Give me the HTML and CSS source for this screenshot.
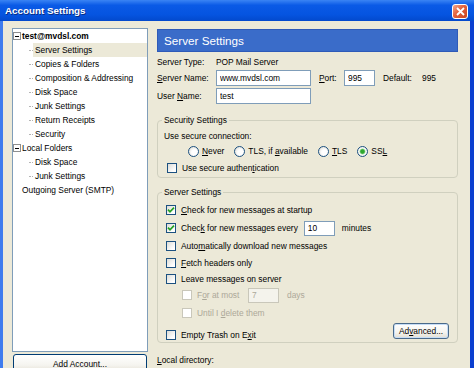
FILE: index.html
```html
<!DOCTYPE html>
<html lang="en">
<head>
    <meta charset="UTF-8" />
    <meta name="viewport" content="width=device-width, initial-scale=1.0" />
    <title>Account Settings</title>
    <link rel="stylesheet" href="styles.css">
</head>
<body>
    <div class="window">
        <div class="titlebar">
            <span class="title">Account Settings</span>
            <span class="close">
                <svg width="9" height="9" viewBox="0 0 9 9"><path d="M1 1 L8 8 M8 1 L1 8" stroke="#fff" stroke-width="1.8" /></svg>
            </span>
        </div>

        <div class="frame">
            <!-- left: account tree -->
            <div class="sidebar">
                <div class="tree">
                    <div class="tree-row account"><span class="expander"><i></i></span>test@mvdsl.com</div>
                    <div class="tree-row selected"><span class="twig"></span><span class="tree-label">Server Settings</span></div>
                    <div class="tree-row"><span class="twig"></span><span class="tree-label">Copies &amp; Folders</span></div>
                    <div class="tree-row"><span class="twig"></span><span class="tree-label">Composition &amp; Addressing</span></div>
                    <div class="tree-row"><span class="twig"></span><span class="tree-label">Disk Space</span></div>
                    <div class="tree-row"><span class="twig"></span><span class="tree-label">Junk Settings</span></div>
                    <div class="tree-row"><span class="twig"></span><span class="tree-label">Return Receipts</span></div>
                    <div class="tree-row"><span class="twig"></span><span class="tree-label">Security</span></div>
                    <div class="tree-row"><span class="expander"><i></i></span>Local Folders</div>
                    <div class="tree-row"><span class="twig"></span><span class="tree-label">Disk Space</span></div>
                    <div class="tree-row"><span class="twig"></span><span class="tree-label">Junk Settings</span></div>
                    <div class="tree-row top-plain">Outgoing Server (SMTP)</div>
                </div>
                <button class="btn add-account"><u>A</u>dd Account...</button>
            </div>

            <!-- right: settings page -->
            <div class="main">
                <div class="page-header">Server Settings</div>

                <div class="field-row type-row">
                    <span class="field-label">Server Type:</span>
                    <span>POP Mail Server</span>
                </div>
                <div class="field-row">
                    <label class="field-label"><u>S</u>erver Name:</label>
                    <input type="text" class="text server-name" value="www.mvdsl.com" />
                    <label class="port-label"><u>P</u>ort:</label>
                    <input type="text" class="text port" value="995" />
                    <span class="default-label">Default:</span>
                    <span>995</span>
                </div>
                <div class="field-row">
                    <label class="field-label">User <u>N</u>ame:</label>
                    <input type="text" class="text server-name" value="test" />
                </div>

                <fieldset class="group security">
                    <legend>Security Settings</legend>
                    <div class="sec-text">Use secure connection:</div>
                    <div class="radios">
                        <label class="radio-item"><span class="radio"></span><span><u>N</u>ever</span></label>
                        <label class="radio-item"><span class="radio"></span><span>TLS, if <u>a</u>vailable</span></label>
                        <label class="radio-item"><span class="radio"></span><span><u>T</u>LS</span></label>
                        <label class="radio-item"><span class="radio on"></span><span>SS<u>L</u></span></label>
                    </div>
                    <div class="opt sec-check">
                        <label class="check-item"><span class="check"></span><span>Use secure authen<u>t</u>ication</span></label>
                    </div>
                </fieldset>

                <fieldset class="group options">
                    <legend>Server Settings</legend>
                    <div class="opt">
                        <label class="check-item"><span class="check"><svg width="8" height="8" viewBox="0 0 8 8"><path d="M1 3.6 L3 5.8 L7 1.6" fill="none" stroke="#21A121" stroke-width="1.7" /></svg></span><span><u>C</u>heck for new messages at startup</span></label>
                    </div>
                    <div class="opt">
                        <label class="check-item"><span class="check"><svg width="8" height="8" viewBox="0 0 8 8"><path d="M1 3.6 L3 5.8 L7 1.6" fill="none" stroke="#21A121" stroke-width="1.7" /></svg></span><span>Chec<u>k</u> for new messages every</span></label>
                        <input type="text" class="text small minutes-input" value="10" />
                        <span class="unit">minutes</span>
                    </div>
                    <div class="opt tight">
                        <label class="check-item"><span class="check"></span><span>Auto<u>m</u>atically download new messages</span></label>
                    </div>
                    <div class="opt tight">
                        <label class="check-item"><span class="check"></span><span><u>F</u>etch headers only</span></label>
                    </div>
                    <div class="opt short">
                        <label class="check-item"><span class="check"></span><span>Leave messages on server</span></label>
                    </div>
                    <div class="opt sub disabled">
                        <label class="check-item"><span class="check"></span><span class="for-label">F<u>o</u>r at most</span></label>
                        <input type="text" class="text small" value="7" disabled />
                        <span class="unit days">days</span>
                    </div>
                    <div class="opt sub disabled">
                        <label class="check-item"><span class="check"></span><span>Until I <u>d</u>elete them</span></label>
                    </div>
                    <div class="last-row">
                        <label class="check-item trash"><span class="check"></span><span>Empty Trash on E<u>x</u>it</span></label>
                        <button class="btn advanced">Ad<u>v</u>anced...</button>
                    </div>
                </fieldset>

                <div class="local-dir"><u>L</u>ocal directory:</div>
            </div>
        </div>
    </div>
</body>
</html>
```

FILE: styles.css
```css
body {
    margin: 0;
    padding: 0;
    font-family: "Liberation Sans", Arial, sans-serif;
    font-size: 8.4px;
    color: #000;
}
.window {
    width: 474px;
    height: 368px;
    display: flex;
    flex-direction: column;
    overflow: hidden;
}

/* title bar */
.titlebar {
    height: 21px;
    flex-shrink: 0;
    display: flex;
    align-items: center;
    justify-content: space-between;
    padding: 0 6px 0 5px;
    background: linear-gradient(#3A84F4, #0A5AE6 25%, #0554E0 70%, #0349CC);
}
.title {
    color: #fff;
    font-weight: bold;
    font-size: 9.8px;
    text-shadow: 1px 1px #0B2C80;
}
.close {
    width: 16px;
    height: 15px;
    margin-top: 2px;
    box-sizing: border-box;
    border: 1px solid #fff;
    border-radius: 3px;
    background: linear-gradient(135deg, #F4A88C, #E2603C 45%, #C8441F);
    display: flex;
    align-items: center;
    justify-content: center;
}

/* window body */
.frame {
    flex: 1;
    min-height: 0;
    display: flex;
    background: #ECE9D8;
    border-left: 3px solid #3F7CEE;
    border-right: 4px solid #0B3FD0;
    padding: 7px 0 0 9px;
    overflow: hidden;
}

/* tree */
.sidebar {
    width: 136px;
    flex-shrink: 0;
    display: flex;
    flex-direction: column;
}
.tree {
    height: 324px;
    flex-shrink: 0;
    box-sizing: border-box;
    border: 1px solid #7F9DB9;
    background: #fff;
}
.tree-row {
    height: 14px;
    display: flex;
    align-items: center;
    white-space: nowrap;
}
.account {
    font-weight: bold;
}
.expander {
    width: 8px;
    height: 8px;
    box-sizing: border-box;
    border: 1px solid #8E8F8F;
    margin-right: 1px;
    display: flex;
    align-items: center;
    justify-content: center;
}
.expander i {
    width: 4px;
    height: 1px;
    background: #000;
}
.twig {
    width: 4px;
    margin-left: 16px;
    border-top: 1px dotted #B4B4B4;
}
.tree-label {
    flex: 1;
    height: 14px;
    line-height: 14px;
    padding-left: 2px;
}
.selected .tree-label {
    background: #ECE9D8;
}
.top-plain {
    padding-left: 9px;
}

/* buttons */
.btn {
    font: inherit;
    color: #000;
    padding: 0;
    border: 1px solid #003C74;
    border-radius: 3px;
    background: linear-gradient(#FFFFFF, #F5F4EF 60%, #E2DED2);
}
.add-account {
    width: 134px;
    height: 19px;
    margin: 2px 0 0 1px;
    flex-shrink: 0;
}
.advanced {
    width: 56px;
    height: 16px;
    margin: 1px 0 0 auto;
    border-color: #4A6A8A;
    box-shadow: inset 0 0 0 1px #C6DDF6;
}

/* settings page */
.main {
    width: 301px;
    margin: 1px 0 0 9px;
    flex-shrink: 0;
}
.page-header {
    height: 23px;
    box-sizing: border-box;
    border: 1px solid #2E5AB8;
    background: #3A6CC9;
    color: #fff;
    font-size: 11.7px;
    padding-left: 6px;
    display: flex;
    align-items: center;
    margin-bottom: 3px;
}
.field-row {
    height: 18px;
    display: flex;
    align-items: center;
    white-space: nowrap;
}
.type-row {
    height: 14px;
}
.field-label {
    width: 59px;
    flex-shrink: 0;
}
.text {
    font: inherit;
    height: 16px;
    box-sizing: border-box;
    margin: 0;
    padding: 0 3px;
    border: 1px solid #7F9DB9;
    background: #fff;
    color: #000;
}
.server-name {
    width: 95px;
}
.port-label {
    width: 25px;
    margin-left: 8px;
}
.port {
    width: 31px;
}
.default-label {
    width: 39px;
    margin-left: 8px;
}

/* group boxes */
.group {
    margin: 9px 0 0;
    padding: 0 8px 0 6px;
    border: 1px solid #D0D0BF;
    border-radius: 4px;
    min-width: 0;
}
.group legend {
    padding: 0 2px;
    margin-left: -2px;
    line-height: 12px;
}
.security {
    padding-top: 3px;
}
.options {
    margin-top: 8px;
    padding-top: 3px;
}
.sec-text {
    height: 14px;
    line-height: 14px;
}
.radios {
    height: 16px;
    display: flex;
    align-items: center;
    gap: 10px;
    padding-left: 24px;
}
.radio-item {
    display: flex;
    align-items: center;
    white-space: nowrap;
}
.radio {
    width: 11px;
    height: 11px;
    box-sizing: border-box;
    border: 1px solid #1C5180;
    border-radius: 50%;
    margin-right: 3px;
    background: radial-gradient(circle at 60% 60%, #fff 35%, #D4D4CC);
}
.radio.on {
    background: radial-gradient(circle, #2FA82F 0 1.8px, #9AD89A 2.6px, #fff 3.4px, #fff 45%, #D4D4CC);
}
.opt {
    height: 18px;
    display: flex;
    align-items: center;
    padding-left: 2px;
    white-space: nowrap;
}
.opt.tight {
    height: 17px;
}
.opt.short {
    height: 15px;
}
.opt.sub {
    padding-left: 18px;
}
.sec-check {
    padding-left: 3px;
}
.check-item {
    display: flex;
    align-items: center;
    height: 14px;
    white-space: nowrap;
}
.check {
    width: 10px;
    height: 10px;
    box-sizing: border-box;
    border: 1px solid #1C5180;
    margin-right: 5px;
    background: linear-gradient(135deg, #DCDCD7, #fff 80%);
    display: flex;
    align-items: center;
    justify-content: center;
}
.small {
    width: 31px;
    height: 15px;
}
.minutes-input {
    margin-left: 6px;
}
.unit {
    margin-left: 7px;
}
.for-label {
    width: 51px;
}
.days {
    margin-left: 8px;
}
.disabled {
    color: #ACA899;
}
.disabled .check {
    border-color: #C9C7BA;
    background: #fff;
}
.disabled .text {
    border-color: #C9C7BA;
    background: #F4F3EC;
    color: #ACA899;
}
.last-row {
    height: 20px;
    display: flex;
    align-items: flex-start;
    padding-left: 2px;
}
.trash {
    margin-top: 6px;
}
.local-dir {
    margin-top: 10px;
    line-height: 14px;
}
```
